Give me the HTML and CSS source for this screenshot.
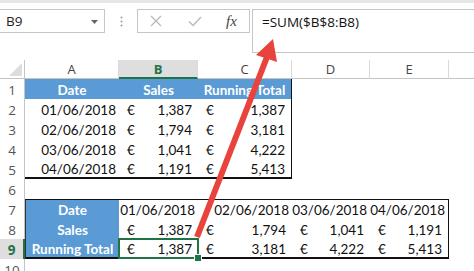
FILE: index.html
```html
<!DOCTYPE html>
<html>
<head>
<meta charset="utf-8">
<link rel="stylesheet" href="styles.css">
</head>
<body>
<div class="app">
  <div class="toolbar">
    <div class="namebox">
      <span class="nb-text">B9</span>
      <svg class="caret" width="7" height="4" viewBox="0 0 7 4"><path d="M0 0H7L3.5 4Z" fill="#666"/></svg>
    </div>
    <div class="grip">
      <svg width="3" height="11" viewBox="0 0 3 11"><circle cx="1.5" cy="1.5" r="1" fill="#9a9a9a"/><circle cx="1.5" cy="5.5" r="1" fill="#9a9a9a"/><circle cx="1.5" cy="9.5" r="1" fill="#9a9a9a"/></svg>
    </div>
    <div class="fxbox">
      <svg class="ico-x" width="12" height="12" viewBox="0 0 12 12"><path d="M1 1L11 11M11 1L1 11" stroke="#b8b8b8" stroke-width="1.3" fill="none"/></svg>
      <svg class="ico-ok" width="14" height="11" viewBox="0 0 14 11"><path d="M1 5.5L5 9.5L13 1" stroke="#b8b8b8" stroke-width="1.4" fill="none"/></svg>
      <span class="fx">fx</span>
    </div>
    <div class="formula">=SUM($B$8:B8)</div>
  </div>

  <div class="sheet">
    <div class="corner"><svg width="13" height="13" viewBox="0 0 13 13"><path d="M13 0V13H0Z" fill="#dcdcdc"/></svg></div>
    <div class="ch">A</div>
    <div class="ch ch-sel">B</div>
    <div class="ch">C</div>
    <div class="ch">D</div>
    <div class="ch">E</div>
    <div class="ch ch-last"></div>

    <div class="rh">1</div>
    <div class="c hd">Date</div>
    <div class="c hd">Sales</div>
    <div class="c hd t1r">Running Total</div>
    <div class="c"></div><div class="c"></div><div class="c"></div>

    <div class="rh">2</div>
    <div class="c dt">01/06/2018</div>
    <div class="c acc"><span>€</span><span>1,387</span></div>
    <div class="c acc t1r"><span>€</span><span>1,387</span></div>
    <div class="c"></div><div class="c"></div><div class="c"></div>

    <div class="rh">3</div>
    <div class="c dt">02/06/2018</div>
    <div class="c acc"><span>€</span><span>1,794</span></div>
    <div class="c acc t1r"><span>€</span><span>3,181</span></div>
    <div class="c"></div><div class="c"></div><div class="c"></div>

    <div class="rh">4</div>
    <div class="c dt">03/06/2018</div>
    <div class="c acc"><span>€</span><span>1,041</span></div>
    <div class="c acc t1r"><span>€</span><span>4,222</span></div>
    <div class="c"></div><div class="c"></div><div class="c"></div>

    <div class="rh">5</div>
    <div class="c dt t1b">04/06/2018</div>
    <div class="c acc t1b"><span>€</span><span>1,191</span></div>
    <div class="c acc t1r t1b"><span>€</span><span>5,413</span></div>
    <div class="c"></div><div class="c"></div><div class="c"></div>

    <div class="rh">6</div>
    <div class="c"></div><div class="c"></div><div class="c"></div>
    <div class="c"></div><div class="c"></div><div class="c"></div>

    <div class="rh">7</div>
    <div class="c hd t2t t2l">Date</div>
    <div class="c dt t2t">01/06/2018</div>
    <div class="c dt t2t">02/06/2018</div>
    <div class="c dt t2t">03/06/2018</div>
    <div class="c dt t2t t2r">04/06/2018</div>
    <div class="c"></div>

    <div class="rh">8</div>
    <div class="c hd t2l">Sales</div>
    <div class="c acc"><span>€</span><span>1,387</span></div>
    <div class="c acc"><span>€</span><span>1,794</span></div>
    <div class="c acc"><span>€</span><span>1,041</span></div>
    <div class="c acc t2r"><span>€</span><span>1,191</span></div>
    <div class="c"></div>

    <div class="rh rh-sel">9</div>
    <div class="c hd t2l t2b">Running Total</div>
    <div class="c acc t2b sel"><span>€</span><span>1,387</span></div>
    <div class="c acc t2b"><span>€</span><span>3,181</span></div>
    <div class="c acc t2b"><span>€</span><span>4,222</span></div>
    <div class="c acc t2b t2r"><span>€</span><span>5,413</span></div>
    <div class="c"></div>

    <div class="rh">10</div>
    <div class="c"></div><div class="c"></div><div class="c"></div>
    <div class="c"></div><div class="c"></div><div class="c"></div>
  </div>

  <svg class="arrow" width="474" height="271" viewBox="0 0 474 271">
    <line x1="197" y1="237" x2="267" y2="57" stroke="#e8433d" stroke-width="6"/>
    <polygon points="273,39 256,55 277,62" fill="#e8433d"/>
  </svg>
</div>
</body>
</html>
```

FILE: styles.css
```css
* { box-sizing: border-box; }
html, body { margin: 0; padding: 0; background: #fff; }
.app {
  position: relative;
  width: 474px;
  height: 271px;
  overflow: hidden;
  background: #fff;
}
.toolbar {
  height: 60px;
  border-top: 3px solid #e6e6e6;
  padding-top: 6px;
  display: flex;
  align-items: flex-start;
  font-family: "Open Sans", "Noto Sans", sans-serif;
  color: #222;
}
.toolbar > * { flex: none; }
.namebox {
  width: 106px;
  height: 24px;
  margin-left: -1px;
  border: 1px solid #c6c6c6;
  display: flex;
  align-items: center;
  justify-content: space-between;
  padding: 0 6px 0 6px;
  font-size: 13.5px;
}
.caret { margin-top: 1px; }
.grip {
  width: 32px;
  height: 24px;
  display: flex;
  align-items: center;
  justify-content: center;
}
.fxbox {
  width: 113px;
  height: 24px;
  border: 1px solid #c6c6c6;
  display: flex;
  align-items: center;
  padding-left: 12px;
}
.ico-x { margin-right: 26px; }
.ico-ok { margin-right: 24px; }
.fx {
  font-family: "Liberation Serif", serif;
  font-style: italic;
  font-size: 15px;
  color: #444;
}
.formula {
  margin-left: 2px;
  width: 240px;
  height: 44px;
  border: 1px solid #c6c6c6;
  padding: 2px 0 0 9px;
  font-size: 13.5px;
  line-height: 20px;
  color: #111;
}

.sheet {
  display: grid;
  grid-template-columns: 25px 94px 79px 94px 78px 79px 25px;
  grid-template-rows: 19px;
  grid-auto-rows: 20px;
  font-family: Lato, "Liberation Sans", sans-serif;
  font-size: 13.5px;
  color: #111;
}
.corner {
  border-bottom: 1px solid #c4c4c4;
  border-right: 1px solid #c4c4c4;
  display: flex;
  align-items: flex-end;
  justify-content: flex-end;
  padding: 0 2px 2px 0;
}
.ch {
  border-bottom: 1px solid #c4c4c4;
  border-right: 1px solid #dadada;
  font-family: "Open Sans", "Noto Sans", sans-serif;
  font-size: 13px;
  color: #444;
  display: flex;
  align-items: center;
  justify-content: center;
}
.ch-last { border-right: none; }
.ch-sel {
  background: #dedede;
  border-bottom: 2px solid #217346;
  color: #217346;
  font-weight: 700;
}
.rh {
  border-right: 1px solid #c4c4c4;
  font-family: "Open Sans", "Noto Sans", sans-serif;
  font-size: 13.5px;
  color: #555;
  display: flex;
  align-items: center;
  justify-content: center;
  padding-top: 1px;
}
.rh-sel {
  background: #dedede;
  border-right: 2px solid #217346;
  color: #217346;
  font-weight: 700;
}
.c {
  display: flex;
  align-items: center;
  white-space: nowrap;
  padding-top: 1px;
}
.hd {
  background: #5b9bd5;
  color: #fff;
  font-weight: 700;
  justify-content: center;
}
.dt {
  justify-content: flex-end;
  padding-right: 3px;
}
.acc {
  justify-content: space-between;
  padding: 1px 6px 0 8px;
}
.t1r { border-right: 1px solid #111; }
.t1b { border-bottom: 2px solid #111; }
.t2t { border-top: 1px solid #111; }
.t2l { border-left: 1px solid #333; }
.t2r { border-right: 1px solid #111; }
.t2b { border-bottom: 2px solid #111; }
.sel { position: relative; }
.sel::after {
  content: "";
  position: absolute;
  left: -1px;
  top: -1px;
  right: -1px;
  bottom: -2px;
  border: 2px solid #217346;
}
.sel::before {
  content: "";
  position: absolute;
  right: -4px;
  bottom: -5px;
  width: 6px;
  height: 6px;
  background: #217346;
  border: 1px solid #fff;
  z-index: 2;
}
.arrow {
  position: absolute;
  left: 0;
  top: 0;
  pointer-events: none;
}
```
